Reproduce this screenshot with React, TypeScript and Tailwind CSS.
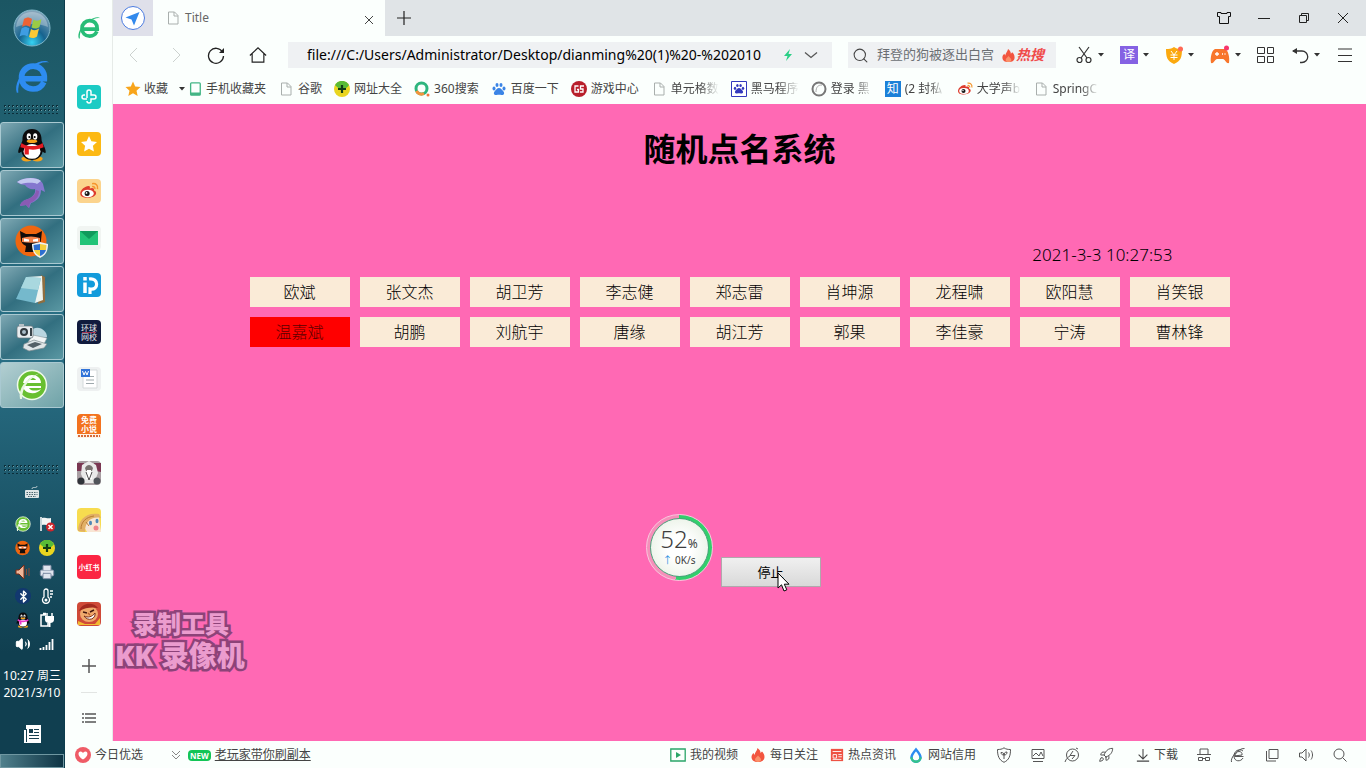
import React from "react";
import { Bluetooth, Printer, Rocket, Search, Volume2 } from "lucide-react";

type IconProps = { className?: string };

const SvgBox = ({
  size = 16,
  view = 16,
  children,
}: {
  size?: number;
  view?: number;
  children: React.ReactNode;
}) => (
  <svg width={size} height={size} viewBox={`0 0 ${view} ${view}`} fill="none" className="shrink-0" aria-hidden="true">
    {children}
  </svg>
);

/* ---------- shared drawings ---------- */

const BrowserE = ({ size, color }: { size: number; color: string }) => (
  <SvgBox size={size} view={32}>
    <path
      d="M26.500 20.500c-1.600 3.700-5.200 6.200-9.600 6.200-6 0-10.200-4.300-10.200-10.200S11 6.300 17 6.300c6.300 0 10.300 4.500 10 11.200H7.500"
      stroke={color}
      strokeWidth="5"
    />
    <path d="M2.500 30C0 24 5 12 15 6.500 22 2 28 .5 31 3c-5-.8-9.500 1-15 4.700C8 13 3 21 3.800 30z" fill={color} />
  </SvgBox>
);

const StartOrb = () => (
  <SvgBox size={38} view={38}>
    <defs>
      <radialGradient id="orb" cx="50%" cy="90%" r="90%">
        <stop offset="0" stopColor="#35d3f3" />
        <stop offset=".4" stopColor="#16638f" />
        <stop offset="1" stopColor="#8ca9bd" />
      </radialGradient>
    </defs>
    <circle cx="19" cy="19" r="18" fill="url(#orb)" stroke="#7fb6c8" />
    <path d="M3 18C4 8 11 3 19 3s15 5 16 15c-9-4-22-4-32 0z" fill="#fff" opacity=".3" />
    <path d="M11 10c3-2 5-2 8 0l-2 8c-3-2-5-2-8 0z" fill="#ee6335" />
    <path d="M20.500 10.500c3 1.800 5 1.500 8-.5l-2 8c-3 2-5 2-8 .5z" fill="#9bcb45" />
    <path d="M8.500 19.500c3-2 5-2 8 0l-2 8c-3-2-5-1.500-8 0z" fill="#3f9de2" />
    <path d="M18 20c3 1.800 5 1.500 8-.5l-2 8c-3 2-5 2-8 .5z" fill="#fbc935" />
  </SvgBox>
);

const Penguin = ({ size, scarf }: { size: number; scarf: string }) => (
  <SvgBox size={size} view={32}>
    <ellipse cx="11" cy="29" rx="5" ry="2.500" fill="#f5a21b" />
    <ellipse cx="21" cy="29" rx="5" ry="2.500" fill="#f5a21b" />
    <path d="M16 1c-6 0-9 4-9 10 0 3-4 7-4 12 1 1 2 0 3-1 1 5 5 8 10 8s9-3 10-8c1 1 2 2 3 1 0-5-4-9-4-12 0-6-3-10-9-10z" fill="#0b0b0d" />
    <ellipse cx="16" cy="22" rx="8" ry="7" fill="#fff" />
    <ellipse cx="13" cy="8" rx="2" ry="3" fill="#fff" />
    <ellipse cx="19" cy="8" rx="2" ry="3" fill="#fff" />
    <circle cx="13.500" cy="8.500" r="1" fill="#000" />
    <circle cx="18.500" cy="8.500" r="1" fill="#000" />
    <ellipse cx="16" cy="12.500" rx="5" ry="1.700" fill="#f5a21b" />
    <path d="M6 14c6 4 14 4 20 0l1 4c-5 2-9 3-14 2v5H9v-6l-4-1z" fill={scarf} />
  </SvgBox>
);

const Dolphin = () => (
  <SvgBox size={34} view={34}>
    <path d="M2 6c4-3 9-4 14-4 6 0 10 2 12 6l2 8-4-2c0 7-4 11-10 13l-2 5-3-3-6 1c1-4 4-6 8-7 5-2 8-6 7-10-4 1-8-1-10-4-3 0-6-1-8-3z" fill="#8577cf" />
    <path d="M2 6c6-4 17-6 24-1l-4 3c-4-2-12-1-16 0z" fill="#c3c8f0" />
    <path d="M5 30c1-4 4-6 8-7 5-2 8-5 8-9l3 1c0 6-4 10-9 12l-1 5-3-3z" fill="#8a5bb4" />
  </SvgBox>
);

const Ninja = ({ size, shield }: { size: number; shield?: boolean }) => (
  <SvgBox size={size} view={34}>
    <circle cx="16" cy="17" r="15.500" fill="#f0660f" />
    <path d="M5 7l6 3h10l6-3-1 9c0 3-3 5-5 6l1 6H10l1-6c-2-1-5-3-5-6z" fill="#130d0b" />
    <path d="M7 14c6-2 12-2 18 0v4c-6 1-12 1-18 0z" fill="#f5824a" />
    <path d="M9 14.500l5 1v2H9zM23 14.500l-5 1v2h5z" fill="#fff" />
    {shield && (
      <>
        <path d="M25 18l8 2c0 7-2 11-8 14-6-3-8-7-8-14z" fill="#eef3f5" />
        <path d="M25 20v6h-6l-.5-5zM25 26h6c-1 3-3 5-6 6z" fill="#2e6fd0" />
        <path d="M25 20l6.500 1-.5 5h-6zM19 26h6v6c-3-1-5-3-6-6z" fill="#f5cf3d" />
      </>
    )}
  </SvgBox>
);

const NoteBook = () => (
  <SvgBox size={34} view={34}>
    <path d="M26 3l4 2v25l-7 2z" fill="#8f6e40" />
    <path d="M12 5l15-1 1 24-8 3z" fill="#eef4f0" />
    <path d="M11 5l15 1-6 25L1 27z" fill="#75b9cc" />
    <path d="M11 5l15 1-3 12L6 16z" fill="#a9d8df" />
  </SvgBox>
);

const CameraScanner = () => (
  <SvgBox size={34} view={34}>
    <path d="M14 12c8-9 18-2 18 5l-8 2z" fill="#b9d5e0" />
    <path d="M18 15l14 3-3 6-16-2z" fill="#f2f5f6" stroke="#8b9aa0" strokeWidth=".6" />
    <path d="M9 24l10-4 13 4-3 4-15 3-6-3z" fill="#dfe5e7" stroke="#7c898e" strokeWidth=".7" />
    <path d="M12 25l8-3 7 2-9 4z" fill="#545f66" />
    <rect x="2" y="6" width="16" height="12" rx="2" fill="#e9edf0" stroke="#6a767d" strokeWidth=".7" />
    <rect x="4" y="4" width="5" height="3" fill="#b7c0c5" />
    <circle cx="9" cy="12" r="4" fill="#30383e" />
    <circle cx="9" cy="12" r="2" fill="#a9bcc8" />
    <rect x="15" y="8" width="2" height="8" fill="#394349" />
  </SvgBox>
);

const GreenBrowser = ({ size }: { size: number }) => (
  <SvgBox size={size} view={32}>
    <circle cx="16" cy="16" r="14.500" fill="#68bf31" stroke="#f0faea" strokeWidth="1.500" />
    <path d="M7 14c1-5 4-8 9-8s9 3 9 8zm5-3h8c-1-1.500-2-2-4-2s-3 .5-4 2zM7 17h18v2H13c1 3 8 3.500 12 1-3 6-17 6-18-3z" fill="#fff" />
    <path d="M4 30C2 20 9 9 24 4 13 10 6 18 6 30z" fill="#e6f7dd" />
  </SvgBox>
);

const PageIcon = () => (
  <SvgBox>
    <path d="M3.500 2h6l3.500 3.500V14H3.500zM9 2v4h4" stroke="#a9afad" />
  </SvgBox>
);

const Paw = ({ color }: { color: string }) => (
  <g fill={color}>
    <ellipse cx="3" cy="7.500" rx="1.500" ry="2" />
    <ellipse cx="6" cy="4" rx="1.500" ry="2" />
    <ellipse cx="10" cy="4" rx="1.500" ry="2" />
    <ellipse cx="13" cy="7.500" rx="1.500" ry="2" />
    <path d="M8 7c2 0 3 2 4.500 3.500C14 12.500 12.500 14.500 10.500 14c-2-.5-3-.5-5 0-2 .5-3.500-1.500-2-3.500C5 9 6 7 8 7z" />
  </g>
);

const PlusBadge = () => (
  <SvgBox>
    <circle cx="8" cy="8" r="8" fill="#e9d51f" />
    <path d="M1 4a8 8 0 0 1 14 0c-3 5-9 6-14 0z" fill="#58bb36" />
    <path d="M8 4v8M4 8h8" stroke="#123c15" strokeWidth="2.200" />
  </SvgBox>
);

const Weibo = ({ size }: { size: number }) => (
  <SvgBox size={size}>
    <path d="M1 10c0-3 4-6 6.500-6 1.500 0 1.500 1 1 2 2-1 4-.5 3.500 1.500 1.500.5 2 1.500 1.500 3C12 14 1 15 1 10z" fill="#dd3b2d" />
    <ellipse cx="7" cy="10" rx="4.800" ry="3" fill="#fff" />
    <circle cx="6.500" cy="10" r="2" fill="#161616" />
    <circle cx="6" cy="9.500" r=".7" fill="#fff" />
    <path d="M10.500 4.500c1.500-.3 2.500.6 2.200 2M10.500 2.200c3-.6 5 1.500 4.300 4.300" stroke="#f5952c" strokeWidth="1.200" />
  </SvgBox>
);

const Flame = ({ size = 16 }: { size?: number }) => (
  <SvgBox size={size}>
    <path d="M8 15c-4 0-6.500-2-6.500-5 0-2 1-3 2-4l1 2C5 5 7 4 7.500 1c2 1.500 3 3 3 5l1.500-1.500c1.500 1.500 2.500 3 2.500 5.500 0 3-2.500 5-6.500 5z" fill="#f2553f" />
    <path d="M8 15c-2 0-3-1.200-3-2.500S7 10 8 8.500c1 1.500 3 2.500 3 4S10 15 8 15z" fill="#fb9069" />
  </SvgBox>
);

const Caret = ({ className = "" }: IconProps) => (
  <svg width="6" height="4" viewBox="0 0 6 4" className={`shrink-0 ${className}`} aria-hidden="true">
    <path d="M0 0h6L3 3.500z" fill="#333" />
  </svg>
);

/* ---------- desktop task bar ---------- */

const tasks = [
  { label: "QQ", icon: <Penguin size={34} scarf="#e31b23" /> },
  { label: "Dolphin", icon: <Dolphin /> },
  { label: "KK", icon: <Ninja size={34} shield /> },
  { label: "Notes", icon: <NoteBook /> },
  { label: "Devices", icon: <CameraScanner /> },
  { label: "Browser", icon: <GreenBrowser size={32} />, active: true },
];

const tray = [
  <GreenBrowser size={16} />,
  <SvgBox>
    <path d="M2 1v14" stroke="#fff" strokeWidth="1.500" />
    <path d="M3 2c3-1 5 1 9 0v7c-4 1-6-1-9 0z" fill="#f4f6f6" />
    <circle cx="11.500" cy="11" r="4.500" fill="#d0252c" />
    <path d="M9.500 9l4 4m0-4l-4 4" stroke="#fff" strokeWidth="1.500" />
  </SvgBox>,
  <Ninja size={16} />,
  <PlusBadge />,
  <SvgBox>
    <path d="M1 6h3l5-5v14l-5-5H1z" fill="#f0b79a" stroke="#7c2a15" />
    <path d="M11.500 5v6M14 4v8" stroke="#8e4632" />
  </SvgBox>,
  <Printer size={16} color="#7c8ba3" fill="#dfe4ee" strokeWidth={1.500} />,
  <span className="flex size-4 items-center justify-center rounded-full bg-[#12386f]">
    <Bluetooth size={13} color="#fff" strokeWidth={2.500} />
  </span>,
  <SvgBox>
    <path d="M5 9V3a2 2 0 0 1 4 0v6a3.500 3.500 0 1 1-4 0zM11 3h3M11 6h3M11 9h2" stroke="#fff" strokeWidth="1.300" />
    <circle cx="7" cy="12" r="1.500" fill="#fff" />
  </SvgBox>,
  <Penguin size={16} scarf="#e735c9" />,
  <SvgBox>
    <path d="M7 3H2v11h7v-3M4 1.500h3" stroke="#fff" strokeWidth="1.500" />
    <path d="M8 1v3m5-3v3" stroke="#fff" strokeWidth="1.500" />
    <path d="M6 4h9v4c0 2-2 3-3.500 3v4h-2v-4C8 11 6 10 6 8z" fill="#fff" />
  </SvgBox>,
  <Volume2 size={16} color="#fff" fill="#fff" strokeWidth={1.500} />,
  <SvgBox>
    <path d="M1.500 14v-2m3 2v-3m3 3V9m3 5V6m3 8V3" stroke="#fff" strokeWidth="1.800" />
  </SvgBox>,
];

const Dots = () => (
  <svg width="56" height="9" aria-hidden="true">
    <defs>
      <pattern id="dots" width="4" height="4" patternUnits="userSpaceOnUse">
        <rect width="2" height="2" fill="#0b2e3a" />
        <rect x="1" y="1" width="1" height="1" fill="#6fa0a9" />
      </pattern>
    </defs>
    <rect width="56" height="9" fill="url(#dots)" />
  </svg>
);

const TaskBar = () => (
  <aside className="flex w-[65px] shrink-0 flex-col items-center border-r border-[#0c3c4c] bg-linear-to-b from-[#1b5663] via-[#2a7187] via-45% to-[#103f50] to-85%">
    <button aria-label="Start" className="mt-[9px]">
      <StartOrb />
    </button>
    <button aria-label="Internet Explorer" className="mt-3">
      <BrowserE size={36} color="#2d8cf0" />
    </button>
    <div className="mt-2.5">
      <Dots />
    </div>
    <div className="mt-2 flex w-full flex-col gap-0.5">
      {tasks.map((task) => (
        <button
          key={task.label}
          aria-label={task.label}
          className={`flex h-[46px] w-full items-center justify-center rounded-[3px] border border-[#a9c9d1] bg-linear-to-br ${
            task.active ? "from-[#b3cfd2] to-[#6fa3a8]" : "from-[#7fa9b4] via-[#326f80] to-[#5a98a3]"
          }`}
        >
          {task.icon}
        </button>
      ))}
    </div>
    <div className="mt-[57px]">
      <Dots />
    </div>
    <div className="mt-2.5">
      <SvgBox>
        <path d="M8 5c0-3 5 0 5-3" stroke="#c5d2d5" />
        <rect x="1" y="6" width="14" height="8" rx="1" fill="#dfe6e7" />
        <path d="M2.500 8.500h11M2.500 10.500h11M4 12.500h8" stroke="#4c6870" strokeDasharray="1.500 1" />
      </SvgBox>
    </div>
    <div className="mt-4 grid grid-cols-2 gap-2 pl-1.5">
      {tray.map((icon, i) => (
        <span key={i} className="flex size-4 items-center justify-center">
          {icon}
        </span>
      ))}
    </div>
    <div className="mt-[15px] text-center text-xs leading-[17px] whitespace-nowrap text-white">
      <p>10:27 周三</p>
      <p>2021/3/10</p>
    </div>
    <button aria-label="News" className="mt-6">
      <SvgBox size={18} view={18}>
        <path d="M4 0h14v18H1V5h2V0z" fill="#fff" />
        <path d="M3.500 4v13" stroke="#173f50" />
        <path d="M6 4h4v4H6z" fill="#173f50" />
        <path d="M11 4.500h5M11 7.500h5M6 10.500h10M6 13.500h10" stroke="#173f50" />
      </SvgBox>
    </button>
    <button aria-label="Show desktop" className="mt-auto h-3.5 w-full border border-[#6f97a1] bg-linear-to-r from-[#50808c] to-[#0d3444]" />
  </aside>
);

/* ---------- browser side bar ---------- */

const Tile = ({ fill, children }: { fill: string; children: React.ReactNode }) => (
  <SvgBox size={24} view={24}>
    <rect width="24" height="24" rx="4" fill={fill} />
    {children}
  </SvgBox>
);

const apps = [
  {
    label: "健康",
    icon: (
      <Tile fill="#1bcbc4">
        <path d="M10 13V7a2 2 0 1 1 4 0v3h3a2 2 0 1 1 0 4h-3v2a2 2 0 1 1-4 0M10 14H7a2 2 0 1 1 0-4h1" stroke="#fff" strokeWidth="1.500" />
      </Tile>
    ),
  },
  {
    label: "收藏夹",
    icon: (
      <Tile fill="#fcb913">
        <path d="M12 4l2.400 5.200 5.600.7-4.100 3.900 1 5.700-4.900-2.800-4.900 2.800 1-5.700L4 9.900l5.600-.7z" fill="#fff" />
      </Tile>
    ),
  },
  {
    label: "微博",
    icon: (
      <span className="flex size-6 items-center justify-center rounded bg-[#fbd48d]">
        <Weibo size={20} />
      </span>
    ),
  },
  {
    label: "邮箱",
    icon: (
      <Tile fill="#f1f5f2">
        <path d="M3 5h18v14H3z" fill="#22c377" />
        <path d="M3 5h18l-9 8z" fill="#109a5c" />
      </Tile>
    ),
  },
  {
    label: "PP",
    icon: (
      <Tile fill="#129bdb">
        <path d="M8 9.500V20M8 4v3.500" stroke="#fff" strokeWidth="3.500" />
        <path d="M12 6c10-2 10 12 1 10v5" stroke="#fff" strokeWidth="3.200" />
      </Tile>
    ),
  },
  {
    label: "环球网校",
    icon: (
      <Tile fill="#101b3d">
        <text x="12" y="11" fontSize="8" textAnchor="middle" fill="#e5e7ef">环球</text>
        <text x="12" y="20" fontSize="8" textAnchor="middle" fill="#e5e7ef">网校</text>
        <path d="M5 12.500h14" stroke="#c7395c" strokeWidth=".8" />
      </Tile>
    ),
  },
  {
    label: "文档",
    icon: (
      <Tile fill="#eef1f1">
        <path d="M6 3h14v18H6z" fill="#fff" stroke="#d5dadb" />
        <path d="M9 13h8M9 16.500h8M13 9.500h4" stroke="#9fa9ad" />
        <rect x="4" y="2" width="9" height="8" fill="#3274d8" />
        <path d="M5.500 4l1.500 4 1.500-3.500L10 8l1.500-4" stroke="#fff" />
      </Tile>
    ),
  },
  {
    label: "免费小说",
    icon: (
      <Tile fill="#f3731f">
        <text x="12" y="9" fontSize="8" fontWeight="700" textAnchor="middle" fill="#fff">免费</text>
        <text x="12" y="18" fontSize="8" fontWeight="700" textAnchor="middle" fill="#fff">小说</text>
        <path d="M0 20h24v4H0z" fill="#fff3e6" />
        <path d="M1 22h22" stroke="#d66b3a" strokeWidth="2" strokeDasharray="2 1" />
      </Tile>
    ),
  },
  {
    label: "武侠",
    icon: (
      <Tile fill="#a89fa3">
        <path d="M0 2h7l-2 8H0zM17 2h7v9l-5-1z" fill="#7a3752" />
        <path d="M5 4l7-4 7 4 2 8-4 10H8L4 13z" fill="#e9e9e9" />
        <path d="M8 7c2-4 6-4 8 0l-1 3H9z" fill="#77716f" />
        <path d="M10 9h4l1 9h-6z" fill="#fff" />
        <path d="M9 11l3 8 3-8" stroke="#4c4a4c" />
        <circle cx="4" cy="20" r="3.500" fill="#30343a" />
        <circle cx="20" cy="20" r="3.500" fill="#50545a" />
      </Tile>
    ),
  },
  {
    label: "美少女",
    icon: (
      <Tile fill="#f7dc4f">
        <path d="M5 15C7 8 14 5 22 9l2 15H10z" fill="#f8e6d4" />
        <path d="M1 23C1 12 9 4 22 6l2 4C15 8 8 13 8 24z" fill="#e2b065" />
        <path d="M4 21c0-7 5-12 13-13M9 14l3 4" stroke="#b97c35" />
        <ellipse cx="13.500" cy="15" rx="1.500" ry="2.200" fill="#4f87b5" />
        <ellipse cx="20" cy="13" rx="1.500" ry="2.200" fill="#4f87b5" />
        <circle cx="19" cy="20" r="2.500" fill="#ef8389" />
      </Tile>
    ),
  },
  {
    label: "小红书",
    icon: (
      <Tile fill="#fb2643">
        <text x="12" y="15" fontSize="7" fontWeight="700" textAnchor="middle" fill="#fff">小红书</text>
      </Tile>
    ),
  },
  {
    label: "游戏",
    icon: (
      <Tile fill="#cf4a38">
        <ellipse cx="12" cy="12" rx="9" ry="8" fill="#f0a96c" />
        <path d="M2 9C5 0 17 0 21 6c-5-1-12-1-19 3z" fill="#a32a1f" />
        <path d="M7 14c4 2 8 1 11-3 1 6-7 9-11 3z" fill="#fff" stroke="#7a2b16" />
        <path d="M6 10l4 1M17 8l-4 2" stroke="#41160d" strokeWidth="1.500" />
        <path d="M11 11l2 2" stroke="#b8602e" strokeWidth="1.500" />
        <path d="M1 19l7 3h10l5-6v7H1z" fill="#f2bb32" />
      </Tile>
    ),
  },
];

const SideBar = () => (
  <nav aria-label="Apps" className="flex w-12 shrink-0 flex-col items-center border-r border-[#e6ebe8] pt-4">
    <button aria-label="Home">
      <BrowserE size={24} color="#27bd77" />
    </button>
    <div className="mt-[45px] flex flex-col gap-[23px]">
      {apps.map((app) => (
        <button key={app.label} aria-label={app.label}>
          {app.icon}
        </button>
      ))}
    </div>
    <button aria-label="Add" className="mt-8">
      <SvgBox>
        <path d="M8 1v14M1 8h14" stroke="#555" strokeWidth="1.500" />
      </SvgBox>
    </button>
    <hr className="mt-[18px] w-4 border-[#e2e5e3]" />
    <button aria-label="List" className="mt-[17px]">
      <SvgBox>
        <path d="M1 4h2M1 8h2M1 12h2M4 4h11M4 8h11M4 12h11" stroke="#555" strokeWidth="1.500" />
      </SvgBox>
    </button>
  </nav>
);

/* ---------- browser top ---------- */

const TabStrip = () => (
  <div className="flex h-9 items-stretch bg-[#e0e4e7]">
    <button aria-label="Navigate" className="flex w-10 items-center justify-center bg-[#dfe0ea]">
      <SvgBox size={26} view={26}>
        <circle cx="13" cy="13" r="11.500" fill="#fff" stroke="#4b7be0" />
        <path d="M19.500 7L5.500 12.500l6 2 2.500 6z" fill="#3389ec" />
      </SvgBox>
    </button>
    <div className="flex w-[232px] items-center bg-[#fbfffd] pr-[11px] pl-3 text-xs text-[#666]">
      <PageIcon />
      <span className="ml-1 flex-1">Title</span>
      <button aria-label="Close tab" className="mt-1">
        <SvgBox size={10} view={10}>
          <path d="M1 1l8 8M9 1L1 9" stroke="#444" />
        </SvgBox>
      </button>
    </div>
    <button aria-label="New tab" className="px-3">
      <SvgBox size={14} view={14}>
        <path d="M7 0v14M0 7h14" stroke="#222" strokeWidth="1.200" />
      </SvgBox>
    </button>
    <div className="ml-auto flex items-center gap-[26px] pr-[17px]">
      <button aria-label="Skin">
        <SvgBox size={14} view={14}>
          <path d="M.5 1.500H4v1h6v-1h3.500v4h-2v7h-9v-7h-2z" stroke="#111" />
        </SvgBox>
      </button>
      <button aria-label="Minimize">
        <SvgBox size={14} view={14}>
          <path d="M1 7.500h12" stroke="#222" />
        </SvgBox>
      </button>
      <button aria-label="Restore">
        <SvgBox size={14} view={14}>
          <path d="M2.500 4.500h7v7h-7zM4.500 4V2.500h7v7H10" stroke="#222" />
        </SvgBox>
      </button>
      <button aria-label="Close">
        <SvgBox size={12} view={12}>
          <path d="M1 1l10 10M11 1L1 11" stroke="#222" />
        </SvgBox>
      </button>
    </div>
  </div>
);

const tools = [
  {
    label: "截图",
    icon: (
      <SvgBox size={18} view={18}>
        <path d="M4 1l8 11M14 1L6 12" stroke="#333" strokeWidth="1.200" />
        <circle cx="4.500" cy="14" r="2.500" stroke="#333" strokeWidth="1.200" />
        <circle cx="13.500" cy="14" r="2.500" stroke="#333" strokeWidth="1.200" />
      </SvgBox>
    ),
  },
  {
    label: "翻译",
    icon: <span className="flex size-[18px] items-center justify-center bg-[#8562e3] text-xs text-white">译</span>,
  },
  {
    label: "钱包",
    icon: (
      <SvgBox size={18} view={18}>
        <path d="M9 1c3 2 5 2 8 2 0 8-1 12-8 15C2 15 1 11 1 3c3 0 5 0 8-2z" fill="#fba90f" />
        <path d="M6 5l3 4 3-4M5.500 9h7M5.500 11.500h7M9 9v5" stroke="#fff" />
        <circle cx="15.500" cy="3" r="2.500" fill="#ff6a55" />
      </SvgBox>
    ),
  },
  {
    label: "游戏",
    icon: (
      <SvgBox size={20} view={20}>
        <path d="M5 4h10c3 1 5 8 4 14-3 1-4-4-6-4H7c-2 0-3 5-6 4C0 12 2 5 5 4z" fill="#f8762b" />
        <path d="M7 7v4M5 9h4M12 9h1M14.500 9h1" stroke="#fff" strokeWidth="1.300" />
        <circle cx="16.500" cy="3" r="2.500" fill="#f8376c" />
      </SvgBox>
    ),
  },
];

const AddressBar = () => (
  <div className="flex h-[38px] items-center pr-3 pl-3.5">
    <div className="flex items-center gap-6 pr-[21px]">
      <button aria-label="Back">
        <SvgBox>
          <path d="M10 1L3 8l7 7" stroke="#ccd2cf" />
        </SvgBox>
      </button>
      <button aria-label="Forward">
        <SvgBox>
          <path d="M6 1l7 7-7 7" stroke="#ccd2cf" />
        </SvgBox>
      </button>
      <button aria-label="Reload">
        <SvgBox size={18} view={18}>
          <path d="M15.500 6A7.500 7.500 0 1 0 16.500 10" stroke="#222" strokeWidth="1.300" />
          <path d="M17 2v5h-5z" fill="#222" />
        </SvgBox>
      </button>
      <button aria-label="Homepage">
        <SvgBox size={18} view={20}>
          <path d="M1 10.500L10 2l9 8.500M3.500 8.500V18h13V8.500" stroke="#222" strokeWidth="1.300" />
        </SvgBox>
      </button>
    </div>
    <div className="flex h-[26px] min-w-0 flex-1 items-center bg-[#eff1f3] pr-3.5 pl-[19px]">
      <input
        aria-label="Address"
        readOnly
        value="file:///C:/Users/Administrator/Desktop/dianming%20(1)%20-%202010"
        className="mr-2 min-w-0 flex-1 bg-transparent text-sm text-black outline-none"
      />
      <SvgBox>
        <path d="M10 2L4 9h3.500L6 14l6-7H8.500z" fill="#2bcf86" />
      </SvgBox>
      <button aria-label="History" className="ml-2 shrink-0">
        <SvgBox size={14} view={14}>
          <path d="M1 4.500l6 5 6-5" stroke="#555" strokeWidth="1.300" />
        </SvgBox>
      </button>
    </div>
    <div className="ml-4 flex h-[26px] w-[208px] items-center bg-[#eff1f3] pl-1">
      <Search size={17} color="#444" strokeWidth={1.500} />
      <input
        aria-label="Search"
        placeholder="拜登的狗被逐出白宫"
        className="ml-2 w-[124px] bg-transparent text-[13px] outline-none placeholder:text-[#6b6f73]"
      />
      <Flame size={15} />
      <a href="#hot" className="text-sm font-bold text-[#f04a4a] italic">
        热搜
      </a>
    </div>
    <div className="ml-[19px] flex items-center gap-4">
      {tools.map((tool) => (
        <button key={tool.label} aria-label={tool.label} className="flex items-center gap-[5px]">
          {tool.icon}
          <Caret />
        </button>
      ))}
      <button aria-label="Extensions">
        <SvgBox size={18} view={18}>
          <path d="M.5 1.500h7v6h-7zM10.500 1.500h6v6h-6zM.5 10.500h7v6h-7zM10.500 10.500h6v6h-6z" stroke="#333" />
        </SvgBox>
      </button>
      <button aria-label="Undo" className="flex items-center gap-[5px]">
        <SvgBox size={18} view={18}>
          <path d="M2 5h9a5.500 5.500 0 0 1 0 11.500H9" stroke="#333" strokeWidth="1.300" />
          <path d="M1 5l5-3v6z" fill="#333" />
        </SvgBox>
        <Caret />
      </button>
      <button aria-label="Menu">
        <SvgBox size={18} view={18}>
          <path d="M2 3h14M2 9.500h14M2 15.500h14" stroke="#333" strokeWidth="1.200" />
        </SvgBox>
      </button>
    </div>
  </div>
);

const fade = "overflow-hidden [mask-image:linear-gradient(to_right,black_60%,transparent)]";

const bookmarks = [
  {
    text: "手机收藏夹",
    icon: (
      <SvgBox size={14}>
        <rect x="3" y="1" width="11" height="14" rx="1" stroke="#43b585" strokeWidth="1.500" />
        <path d="M3 12h11v3H3z" fill="#43b585" />
      </SvgBox>
    ),
  },
  { text: "谷歌", icon: <PageIcon /> },
  { text: "网址大全", icon: <PlusBadge /> },
  {
    text: "360搜索",
    icon: (
      <SvgBox>
        <circle cx="7.500" cy="7.500" r="5.500" stroke="#2eb57e" strokeWidth="3" />
        <path d="M2.500 10A5.500 5.500 0 0 0 10 12.500" stroke="#f4943c" strokeWidth="3" />
        <circle cx="14" cy="14" r="1.500" fill="#f4763c" />
      </SvgBox>
    ),
  },
  {
    text: "百度一下",
    icon: (
      <SvgBox>
        <Paw color="#3b84e6" />
      </SvgBox>
    ),
  },
  {
    text: "游戏中心",
    icon: (
      <SvgBox>
        <circle cx="8" cy="8" r="8" fill="#b81f2b" />
        <path d="M7.500 5H4v6h3.500V8.500H6M13 5H9.500v3H12v3H9" stroke="#fff" strokeWidth="1.300" />
      </SvgBox>
    ),
  },
  { text: "单元格数", icon: <PageIcon />, width: "w-12" },
  {
    text: "黑马程序",
    icon: (
      <SvgBox>
        <path d="M.5.5h15v15H.5z" fill="#fff" stroke="#3338bd" />
        <g transform="translate(1.600 1.300) scale(.8)">
          <Paw color="#3338bd" />
        </g>
      </SvgBox>
    ),
    width: "w-12",
  },
  {
    text: "登录 黑",
    icon: (
      <SvgBox>
        <circle cx="8" cy="8" r="6.500" stroke="#777" strokeWidth="2" />
        <path d="M5 11c0-5 2-7 6-7" stroke="#aaa" />
      </SvgBox>
    ),
    width: "w-[42px]",
  },
  {
    text: "(2 封私",
    icon: <span className="flex size-4 items-center justify-center bg-[#1b80d8] text-xs text-white">知</span>,
    width: "w-10",
  },
  { text: "大学声b", icon: <Weibo size={16} />, width: "w-11" },
  { text: "SpringC", icon: <PageIcon />, width: "w-[46px]" },
];

const BookmarkBar = () => (
  <div className="flex h-[30px] items-center overflow-hidden pl-3 text-xs whitespace-nowrap text-[#444]">
    <button className="flex items-center gap-[3px]">
      <SvgBox>
        <path d="M8 .5l2.200 5 5.300.5-4 3.700 1.200 5.300L8 12.200 3.300 15l1.200-5.300L.5 6l5.300-.5z" fill="#f8a51b" />
      </SvgBox>
      收藏
      <Caret className="ml-2" />
    </button>
    <div className="ml-[3px] flex gap-3">
      {bookmarks.map((mark) => (
        <a key={mark.text} href="#bookmark" className="flex items-center gap-1">
          {mark.icon}
          <span className={mark.width ? `${mark.width} ${fade}` : ""}>{mark.text}</span>
        </a>
      ))}
    </div>
  </div>
);

/* ---------- page ---------- */

const names = [
  "欧斌", "张文杰", "胡卫芳", "李志健", "郑志雷", "肖坤源", "龙程啸", "欧阳慧", "肖笑银",
  "温嘉斌", "胡鹏", "刘航宇", "唐缘", "胡江芳", "郭果", "李佳豪", "宁涛", "曹林锋",
];
const picked = "温嘉斌";

const SpeedBall = () => (
  <div className="absolute right-full bottom-1.5 mr-2 flex size-[67px] flex-col items-center justify-center rounded-full border border-[#f7c9dd] bg-[conic-gradient(#32cf6c_0_52%,#f58fba_52%)] p-[3px]">
    <div className="flex size-full flex-col items-center justify-center rounded-full border border-[#49a27b] bg-[radial-gradient(#ffffff_30%,#e2eddd)] text-[#3d3d3d]">
      <p className="text-2xl leading-6 font-light">
        52<span className="text-xs font-normal">%</span>
      </p>
      <p className="text-[10px] leading-4">
        <span className="text-[#2c92e0]">↑</span> 0K/s
      </p>
    </div>
  </div>
);

const Watermark = () => (
  <div className="absolute bottom-[70px] left-0.5 leading-8 font-black whitespace-nowrap text-[#eb9cce] [-webkit-text-stroke:5px_#8d4379] [paint-order:stroke_fill]">
    <p className="pl-[18px] text-2xl leading-[30px]">录制工具</p>
    <p className="text-[28px]">KK 录像机</p>
  </div>
);

const RollCall = () => (
  <main className="relative flex-1 bg-[#ff69b4] pt-[21px] text-black">
    <h1 className="text-center text-[32px] leading-[48px] font-bold">随机点名系统</h1>
    <div className="mx-auto mt-[70px] w-[980px]">
      <p className="pr-[57px] text-right text-[17px] leading-6 font-light">2021-3-3 10:27:53</p>
      <ul className="mt-2.5 grid grid-cols-9 gap-2.5">
        {names.map((name) => (
          <li
            key={name}
            className={`h-[30px] text-center text-base leading-[30px] font-light ${
              name === picked ? "bg-[#ff0000] text-[#5c0000]" : "bg-[#faebd7]"
            }`}
          >
            {name}
          </li>
        ))}
      </ul>
      <div className="relative mt-[210px] ml-[471px] w-[100px]">
        <SpeedBall />
        <button className="h-[30px] w-full border border-[#b0a8ac] bg-linear-to-b from-[#f0f0f0] to-[#d9d9d9] pt-0.5 text-[13px]">
          停止
        </button>
        <svg width="14" height="20" viewBox="0 0 14 20" className="absolute top-[15px] left-14" aria-hidden="true">
          <path d="M1 1v15l3.500-3.200L7 19l2.800-1.200-2.500-5.600H12z" fill="#fff" stroke="#000" />
        </svg>
      </div>
    </div>
    <Watermark />
  </main>
);

/* ---------- status bar ---------- */

const links = [
  {
    text: "我的视频",
    icon: (
      <SvgBox>
        <path d="M.8 2h14.400v12H.8z" stroke="#2aa568" strokeWidth="1.300" />
        <path d="M6 5l5 3-5 3z" fill="#2aa568" />
      </SvgBox>
    ),
  },
  { text: "每日关注", icon: <Flame /> },
  {
    text: "热点资讯",
    icon: (
      <SvgBox size={14}>
        <path d="M1 1h14v14H1z" fill="#ee5243" />
        <path d="M3 4h10M3.500 7.500h4v4h-4zM9.500 7.500h4M9.500 10h4M3 13h10" stroke="#fff" />
      </SvgBox>
    ),
  },
  {
    text: "网站信用",
    icon: (
      <SvgBox>
        <path d="M8 2.500C5 6 3.500 8 3.500 10.200a4.500 4.500 0 0 0 9 0C12.500 8 11 6 8 2.500z" stroke="#2b8df0" strokeWidth="2.500" />
        <path d="M3.500 10.200a4.500 4.500 0 0 0 9 0" stroke="#33c48a" strokeWidth="2.500" />
      </SvgBox>
    ),
  },
];

const statusLeft = [
  <path key="shield" d="M8 .8c2 1.500 4 1.700 6.500 1.700C14.500 9 13 13 8 15.300 3 13 1.500 9 1.500 2.500 4 2.500 6 2.300 8 .8zM8 12V6m0 2c-2 0-3-1-3-2.500C7 5.500 8 6 8 8c0-2 1-3 3-3 0 2-1 3-3 3" />,
  <path key="image" d="M2 2.500h12v9H2zM3 9l3-3 3 3 2-4 2 4M3 14.500h10" />,
  <g key="boost">
    <circle cx="8.500" cy="8" r="6" />
    <path d="M9 4L6 8.500h5L8 12M1 15c1-3 3-5 5-6M12 1l2 1" />
  </g>,
];

const statusRight = [
  <path key="private" d="M4 7V2h8v5M1 7.500h14M2.500 10.500h4v3h-4zM9.500 10.500h4v3h-4zM6.500 11.500h3" />,
  <path key="compat" d="M13.500 9.500H5c0-3 2-5 4-5s3.500 1.500 3 3.500L4 9M13 11c-2 4-9 4-9-2 0-5 5-8 9-5M1.500 15C0 11 8 1 14.500 1.500" />,
  <path key="windows" d="M5 2.500h9v9H5zM2.500 4v10H12" />,
  <path key="volume" d="M1.500 6h2.500l4-4v12l-4-4H1.500zM10.500 5.500c1 1.500 1 3.500 0 5M13 3.500c2 2.500 2 6.500 0 9" />,
  <path key="zoom" d="M12 7a5 5 0 1 1-10 0 5 5 0 0 1 10 0zM10.500 10.500l4 4" />,
];

const StatusIcon = ({ children }: { children: React.ReactNode }) => (
  <button aria-label="Status tool">
    <SvgBox>
      <g stroke="#555">{children}</g>
    </SvgBox>
  </button>
);

const StatusBar = () => (
  <footer className="flex h-[27px] items-center pt-px pr-[18px] pl-2.5 text-xs whitespace-nowrap text-[#444]">
    <button className="flex items-center gap-1">
      <SvgBox>
        <circle cx="8" cy="8" r="8" fill="#ef5c67" />
        <path d="M8 12.500C2 9 3 4.500 5.500 4.500 7 4.500 8 6 8 6s1-1.500 2.500-1.500C13 4.500 14 9 8 12.500z" fill="#fff" />
      </SvgBox>
      今日优选
    </button>
    <button aria-label="More" className="ml-7">
      <SvgBox size={10} view={10}>
        <path d="M1 1l4 4 4-4M1 5l4 4 4-4" stroke="#888" />
      </SvgBox>
    </button>
    <span className="ml-[7px] rounded-sm bg-[#13c556] px-0.5 text-[8px] leading-[11px] font-bold text-white">NEW</span>
    <a href="#promo" className="ml-1 underline">
      老玩家带你刷副本
    </a>
    <div className="ml-auto flex gap-3">
      {links.map((link) => (
        <a key={link.text} href="#status" className="flex items-center gap-1">
          {link.icon}
          {link.text}
        </a>
      ))}
    </div>
    <div className="ml-5 flex items-center gap-[18px]">
      {statusLeft.map((icon, i) => (
        <StatusIcon key={i}>{icon}</StatusIcon>
      ))}
      <button aria-label="Accelerate">
        <Rocket size={16} color="#555" strokeWidth={1.500} />
      </button>
      <button className="ml-1 flex items-center gap-1">
        <SvgBox size={14}>
          <path d="M8 1v11M3 7.500l5 5 5-5M1 15h14" stroke="#444" strokeWidth="1.200" />
        </SvgBox>
        下载
      </button>
      {statusRight.map((icon, i) => (
        <StatusIcon key={i}>{icon}</StatusIcon>
      ))}
    </div>
  </footer>
);

const App = () => {
  return (
    <div className="flex min-h-screen w-full bg-[#fbfffd] font-['Noto_Sans','Noto_Sans_CJK_SC',sans-serif]">
      <TaskBar />
      <div className="flex min-w-0 flex-1 flex-col">
        <div className="flex flex-1">
          <SideBar />
          <div className="flex min-w-0 flex-1 flex-col">
            <TabStrip />
            <AddressBar />
            <BookmarkBar />
            <RollCall />
          </div>
        </div>
        <StatusBar />
      </div>
    </div>
  );
};

export default App;
